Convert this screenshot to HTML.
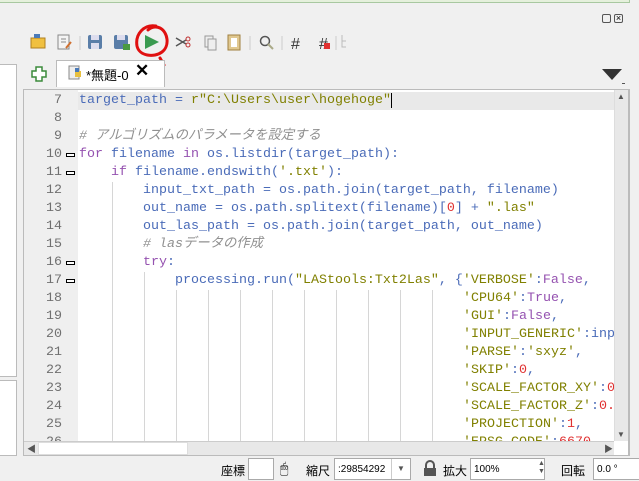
<!DOCTYPE html>
<html><head><meta charset="utf-8"><style>
*{margin:0;padding:0;box-sizing:border-box}
body{width:639px;height:481px;background:#f0f0f0;position:relative;overflow:hidden;font-family:"Liberation Sans","Noto Sans CJK JP",sans-serif}
.a{position:absolute}
.code{font-family:"Liberation Mono","Noto Sans CJK JP",monospace;font-size:13.33px;line-height:18px;white-space:pre}
.ln{position:absolute;left:24px;width:38px;text-align:right;color:#707070}
.ci{position:absolute;left:79px;color:#4a6bb8}
.k{color:#9552b0}.s{color:#808000}.c{color:#909090;font-style:italic}.n{color:#e03030}.d{color:#4a6bb8}
.fold{position:absolute;left:66px;width:9px;height:4px;border:1px solid #000;background:#fff}
.g{position:absolute;width:1px;background:#d6d6d6}
.st{font-size:12px;color:#000}
</style></head><body>
<div class="a" style="left:0;top:0;width:630px;height:3px;background:#e5f0dc;border-bottom:1px solid #a8c8a0;border-right:1px solid #a8c8a0"></div>
<div class="a" style="left:602px;top:14px;width:9px;height:9px;border:1px solid #555;border-radius:2px"></div>
<div class="a" style="left:614px;top:14px;width:9px;height:9px;border:1px solid #555;border-radius:2px;font-size:9px;line-height:7px;text-align:center">×</div>
<svg class="a" style="left:28px;top:30px" width="320" height="28">
<rect x="3" y="8" width="14" height="10" fill="#f0c040" stroke="#b08020"/><rect x="6" y="4" width="6" height="4" fill="#4a7ab8"/>
<rect x="30" y="5" width="11" height="14" fill="#f4f4f4" stroke="#888"/><line x1="33" y1="9" x2="38" y2="9" stroke="#888"/><line x1="33" y1="12" x2="38" y2="12" stroke="#888"/><path d="M38 18 l5 -6" stroke="#d07030" stroke-width="2"/>
<line x1="52" y1="6" x2="52" y2="20" stroke="#ccc"/>
<rect x="60" y="5" width="14" height="14" rx="2" fill="#5a7ea8"/><rect x="63" y="5" width="8" height="5" fill="#dde"/><rect x="63" y="13" width="8" height="6" fill="#dde"/>
<rect x="86" y="5" width="14" height="14" rx="2" fill="#5a7ea8"/><rect x="89" y="5" width="8" height="5" fill="#dde"/><rect x="95" y="14" width="7" height="6" fill="#4a9a40"/>
<path d="M117 5 L131 12 L117 19 Z" fill="#3a9a50"/>
<path d="M148 8 l10 6 M148 16 l10 -6" stroke="#555" stroke-width="1.5"/><circle cx="160" cy="9" r="2" fill="none" stroke="#c03030"/><circle cx="160" cy="15" r="2" fill="none" stroke="#c03030"/>
<rect x="177" y="6" width="8" height="11" fill="#eee" stroke="#999"/><rect x="180" y="9" width="8" height="11" fill="#eee" stroke="#999"/>
<rect x="200" y="5" width="12" height="15" fill="#e0c890" stroke="#a08040"/><rect x="203" y="8" width="6" height="9" fill="#fff"/>
<line x1="222" y1="6" x2="222" y2="20" stroke="#ccc"/>
<circle cx="237" cy="11" r="4.5" fill="none" stroke="#555" stroke-width="1.5"/><line x1="240" y1="14" x2="245" y2="19" stroke="#aa8" stroke-width="2"/>
<line x1="254" y1="6" x2="254" y2="20" stroke="#ccc"/>
<text x="263" y="19" font-size="16" font-family="Liberation Sans" fill="#333">#</text>
<text x="291" y="19" font-size="16" font-family="Liberation Sans" fill="#333">#</text><rect x="296" y="13" width="6" height="6" fill="#e03030"/>
<line x1="308" y1="6" x2="308" y2="20" stroke="#ccc"/>
<path d="M314 5 v12 h4 M314 11 h4" stroke="#bbb" fill="none"/>
</svg>
<svg class="a" style="left:128px;top:20px" width="50" height="46"><path d="M28 6 C16 4 7 14 9 26 C11 36 26 38 34 32 C42 26 40 12 32 8 C28 6 23 7 20 10 M32 38 L36 45" fill="none" stroke="#e01010" stroke-width="3" stroke-linecap="round"/></svg>
<div class="a" style="left:0;top:64px;width:17px;height:313px;background:#fff;border:1px solid #bbb;border-left:none"></div>
<div class="a" style="left:0;top:380px;width:17px;height:76px;background:#fff;border:1px solid #bbb;border-left:none"></div>
<svg class="a" style="left:31px;top:66px" width="16" height="16"><path d="M5 1h6v4h4v6h-4v4H5v-4H1V5h4z" fill="#fff" stroke="#3a8a3a" stroke-width="1.5"/></svg>
<div class="a" style="left:56px;top:60px;width:109px;height:27px;background:#fff;border:1px solid #bbb;border-bottom:none"></div>
<svg class="a" style="left:68px;top:65px" width="14" height="16"><rect x="1" y="1" width="10" height="13" fill="#eee" stroke="#888"/><rect x="7" y="6" width="6" height="6" fill="#e8c040"/><rect x="7" y="3" width="4" height="4" fill="#4a7ab8"/></svg>
<div class="a" style="left:86px;top:65px;font-size:13px">*無題-0</div>
<div class="a" style="left:135px;top:61px;font-size:17px;font-weight:bold">✕</div>
<svg class="a" style="left:602px;top:69px" width="24" height="16"><path d="M0 0h20l-10 11z" fill="#333"/><rect x="20" y="14" width="3" height="1" fill="#555"/></svg>
<div class="a" style="left:23px;top:89px;width:606px;height:367px;background:#fff;border:1px solid #bbb"></div>
<div class="a" style="left:24px;top:90px;width:54px;height:351px;background:#efefef"></div>
<div class="a" style="left:78px;top:92px;width:536px;height:18px;background:#e9e9e9"></div>
<div class="g" style="left:112px;top:182px;height:259px"></div>
<div class="g" style="left:144px;top:272px;height:169px"></div>
<div class="g" style="left:176px;top:290px;height:151px"></div>
<div class="g" style="left:208px;top:290px;height:151px"></div>
<div class="g" style="left:240px;top:290px;height:151px"></div>
<div class="g" style="left:272px;top:290px;height:151px"></div>
<div class="g" style="left:304px;top:290px;height:151px"></div>
<div class="g" style="left:336px;top:290px;height:151px"></div>
<div class="g" style="left:368px;top:290px;height:151px"></div>
<div class="g" style="left:400px;top:290px;height:151px"></div>
<div class="g" style="left:432px;top:290px;height:151px"></div>
<div class="code a" style="left:0;top:92px;width:614px;height:349px;overflow:hidden">
<div class="ln" style="top:0">7</div><div class="ln" style="top:18px">8</div><div class="ln" style="top:36px">9</div><div class="ln" style="top:54px">10</div><div class="ln" style="top:72px">11</div><div class="ln" style="top:90px">12</div><div class="ln" style="top:108px">13</div><div class="ln" style="top:126px">14</div><div class="ln" style="top:144px">15</div><div class="ln" style="top:162px">16</div><div class="ln" style="top:180px">17</div><div class="ln" style="top:198px">18</div><div class="ln" style="top:216px">19</div><div class="ln" style="top:234px">20</div><div class="ln" style="top:252px">21</div><div class="ln" style="top:270px">22</div><div class="ln" style="top:288px">23</div><div class="ln" style="top:306px">24</div><div class="ln" style="top:324px">25</div><div class="ln" style="top:342px">26</div>
<div class="fold" style="top:61px"></div><div class="fold" style="top:79px"></div><div class="fold" style="top:169px"></div><div class="fold" style="top:187px"></div>
<div class="ci" style="top:0">target_path = <span class="s">r"C:\Users\user\hogehoge"</span><span style="border-left:1px solid #000"></span></div>
<div class="ci c" style="top:36px"># アルゴリズムのパラメータを設定する</div>
<div class="ci" style="top:54px"><span class="k">for</span> filename <span class="k">in</span> os.listdir(target_path):</div>
<div class="ci" style="top:72px">    <span class="k">if</span> filename.endswith(<span class="s">'.txt'</span>):</div>
<div class="ci" style="top:90px">        input_txt_path = os.path.join(target_path, filename)</div>
<div class="ci" style="top:108px">        out_name = os.path.splitext(filename)[<span class="n">0</span>] + <span class="s">".las"</span></div>
<div class="ci" style="top:126px">        out_las_path = os.path.join(target_path, out_name)</div>
<div class="ci c" style="top:144px">        # lasデータの作成</div>
<div class="ci" style="top:162px">        <span class="k">try</span>:</div>
<div class="ci" style="top:180px">            processing.run(<span class="s">"LAStools:Txt2Las"</span>, {<span class="s">'VERBOSE'</span>:<span class="k">False</span>,</div>
<div class="ci" style="top:198px;left:463px"><span class="s">'CPU64'</span>:<span class="k">True</span>,</div>
<div class="ci" style="top:216px;left:463px"><span class="s">'GUI'</span>:<span class="k">False</span>,</div>
<div class="ci" style="top:234px;left:463px"><span class="s">'INPUT_GENERIC'</span>:inp</div>
<div class="ci" style="top:252px;left:463px"><span class="s">'PARSE'</span>:<span class="s">'sxyz'</span>,</div>
<div class="ci" style="top:270px;left:463px"><span class="s">'SKIP'</span>:<span class="n">0</span>,</div>
<div class="ci" style="top:288px;left:463px"><span class="s">'SCALE_FACTOR_XY'</span>:<span class="n">0</span></div>
<div class="ci" style="top:306px;left:463px"><span class="s">'SCALE_FACTOR_Z'</span>:<span class="n">0.</span></div>
<div class="ci" style="top:324px;left:463px"><span class="s">'PROJECTION'</span>:<span class="n">1</span>,</div>
<div class="ci" style="top:342px;left:463px"><span class="s">'EPSG_CODE'</span>:<span class="n">6670</span></div>
</div>
<div class="a" style="left:614px;top:90px;width:14px;height:351px;background:#e8e8e8;border-left:1px solid #ddd"></div>
<div class="a" style="left:617px;top:92px;font-size:8px;color:#555">▲</div>
<div class="a" style="left:617px;top:430px;font-size:8px;color:#555">▼</div>
<div class="a" style="left:24px;top:441px;width:590px;height:14px;background:#e8e8e8;border-top:1px solid #ccc"></div>
<div class="a" style="left:38px;top:442px;width:150px;height:13px;background:#fff;border:1px solid #ddd"></div>
<div class="a" style="left:27px;top:442px;font-size:9px;color:#555">◀</div>
<div class="a" style="left:604px;top:442px;font-size:9px;color:#555">▶</div>
<div class="a" style="left:629px;top:89px;width:10px;height:367px;border-left:1px solid #bbb;background:#f0f0f0"></div>
<div class="a st" style="left:221px;top:462px">座標</div>
<div class="a" style="left:248px;top:458px;width:26px;height:22px;background:#fff;border:1px solid #aaa"></div>
<div class="a" style="left:280px;top:460px;font-size:14px">🖱</div>
<div class="a st" style="left:306px;top:462px">縮尺</div>
<div class="a" style="left:334px;top:458px;width:77px;height:22px;background:#fff;border:1px solid #aaa;font-size:10px;padding:5px 3px">:29854292</div>
<div class="a" style="left:391px;top:459px;width:19px;height:20px;border-left:1px solid #ccc;font-size:8px;text-align:center;line-height:20px;color:#555">▼</div>
<svg class="a" style="left:423px;top:460px" width="14" height="17"><path d="M3 8V5a4 4 0 0 1 8 0v3" stroke="#555" stroke-width="2" fill="none"/><rect x="1" y="8" width="12" height="8" fill="#555"/></svg>
<div class="a st" style="left:443px;top:462px">拡大</div>
<div class="a" style="left:470px;top:458px;width:75px;height:22px;background:#fff;border:1px solid #aaa;font-size:10px;padding:5px 3px">100%</div>
<div class="a" style="left:538px;top:460px;font-size:7px;line-height:8px;color:#555">▲<br>▼</div>
<div class="a st" style="left:561px;top:462px">回転</div>
<div class="a" style="left:593px;top:458px;width:50px;height:22px;background:#fff;border:1px solid #aaa;font-size:10px;padding:5px 3px">0.0 °</div>
</body></html>
